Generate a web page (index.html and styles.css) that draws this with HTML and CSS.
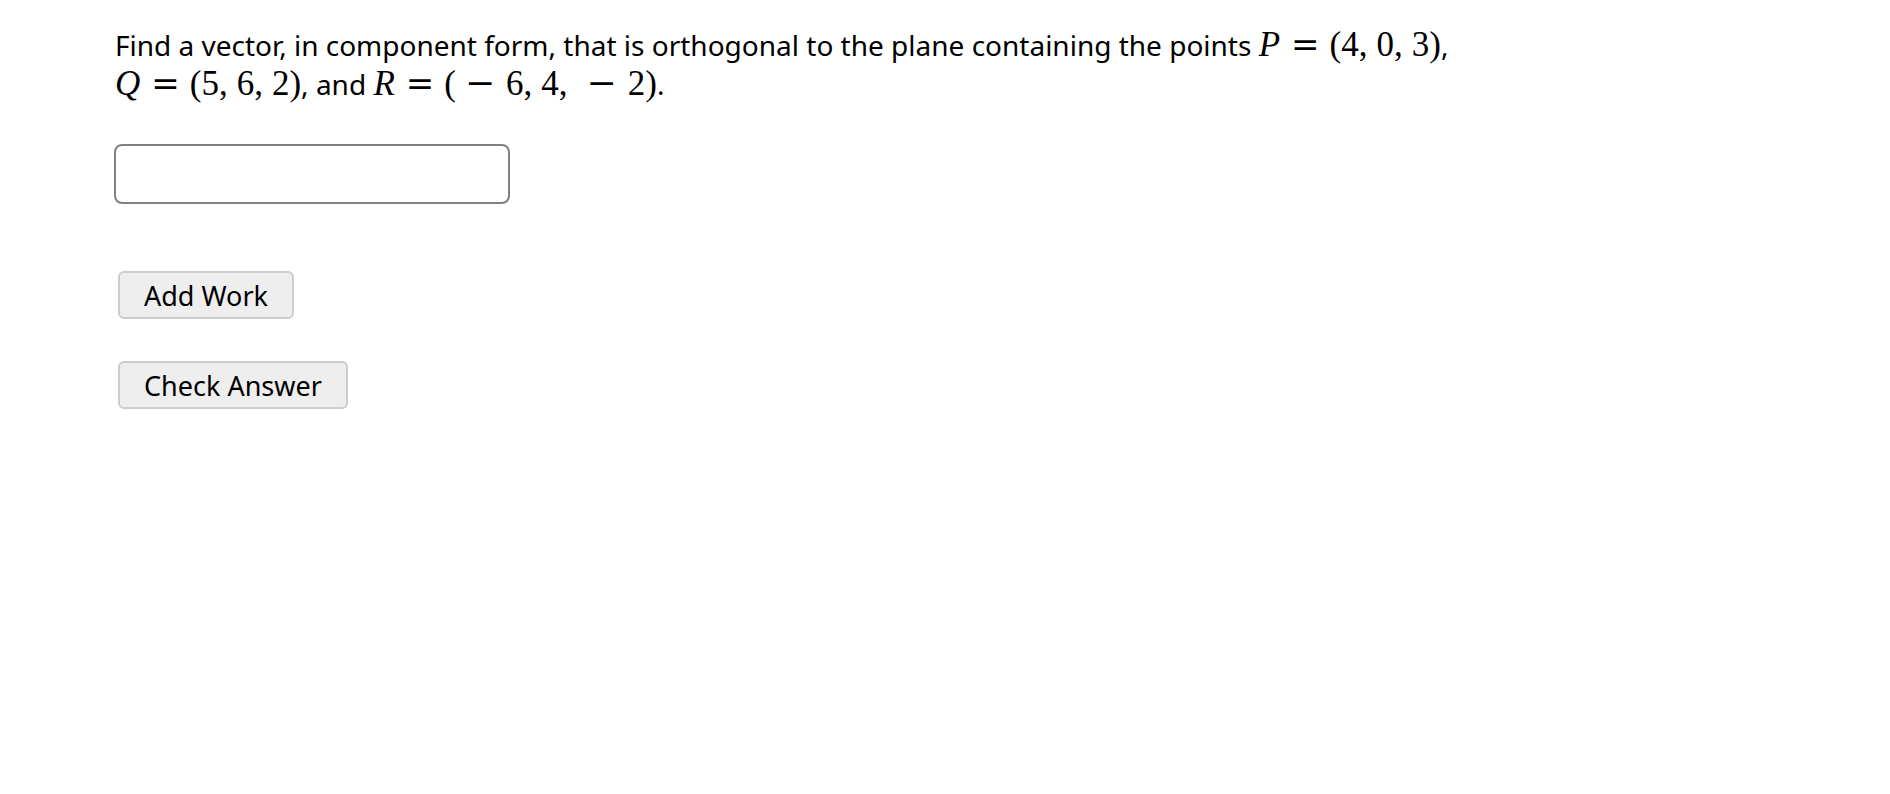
FILE: index.html
```html
<!DOCTYPE html>
<html lang="en">
<head>
<meta charset="utf-8">
<title>Question</title>
<link rel="stylesheet" href="styles.css">
</head>
<body>
<main class="question">
  <p class="prompt">Find a vector, in component form, that is orthogonal to the plane containing the points <span class="math"><i class="var">P</i><span class="rel">=</span>(4,<span class="thin"></span>0,<span class="thin"></span>3)</span>, <span class="math"><i class="var">Q</i><span class="rel">=</span>(5,<span class="thin"></span>6,<span class="thin"></span>2)</span>, and <span class="math"><i class="var">R</i><span class="rel">=</span>(<span class="bin">−</span>6,<span class="thin"></span>4,<span class="thin"></span><span class="bin bin-wide">−</span>2)</span>.</p>
  <div class="answer-row">
    <input class="answer" type="text" aria-label="Answer">
  </div>
  <div class="actions">
    <button class="btn" type="button">Add Work</button>
    <button class="btn" type="button">Check Answer</button>
  </div>
</main>
</body>
</html>
```
FILE: styles.css
```css
html, body {
  margin: 0;
  padding: 0;
  background: #ffffff;
}
.question {
  padding: 26px 0 0 114px;
  color: #000000;
  font-family: "Noto Sans", "Open Sans", sans-serif;
}
.prompt {
  margin: 0 0 0 1px;
  width: 1400px;
  font-size: 28px;
  line-height: 39px;
}
.math {
  font-family: "Liberation Serif", "DejaVu Serif", serif;
  font-size: 35px;
  line-height: 1;
  white-space: nowrap;
}
.var {
  font-style: italic;
  padding-right: 2px;
}
.rel {
  display: inline-block;
  margin: 0 10px 0 9px;
  font-family: "DejaVu Serif", serif;
  font-size: 34px;
}
.bin {
  display: inline-block;
  margin: 0 11px 0 9px;
  font-family: "DejaVu Serif", serif;
  font-size: 36px;
}
.bin-wide {
  margin-left: 10px;
}
.thin {
  display: inline-block;
  width: 9px;
}
.answer-row {
  margin-top: 40px;
}
.answer {
  box-sizing: border-box;
  width: 396px;
  height: 60px;
  margin: 0;
  padding: 0 12px;
  border: 2px solid #808080;
  border-radius: 8px;
  background: #ffffff;
  font-family: "Noto Sans", sans-serif;
  font-size: 24px;
}
.actions {
  display: flex;
  flex-direction: column;
  align-items: flex-start;
  gap: 42px;
  margin: 67px 0 0 4px;
}
.btn {
  box-sizing: border-box;
  height: 48px;
  margin: 0;
  padding: 0 24px;
  border: 2px solid #cccccc;
  border-radius: 6px;
  background: #eeeeee;
  color: #000000;
  font-family: "Noto Sans", sans-serif;
  font-size: 27px;
  line-height: 1;
}
```
